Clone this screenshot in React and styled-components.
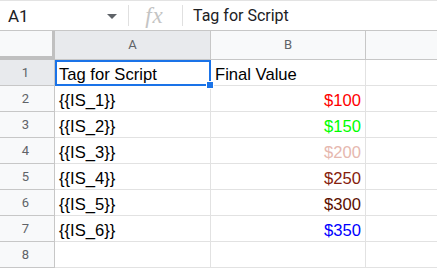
import styled, { createGlobalStyle } from 'styled-components';

const GlobalStyle = createGlobalStyle`
	html, body {
		margin: 0;
		padding: 0;
		background: #ffffff;
		overflow: hidden;
	}
	* {
		box-sizing: border-box;
	}
`;

const rows = [
	{ tag: '{{IS_1}}', value: '$100', color: '#ff0000' },
	{ tag: '{{IS_2}}', value: '$150', color: '#00ff00' },
	{ tag: '{{IS_3}}', value: '$200', color: '#e6b8af' },
	{ tag: '{{IS_4}}', value: '$250', color: '#85200c' },
	{ tag: '{{IS_5}}', value: '$300', color: '#5b0f00' },
	{ tag: '{{IS_6}}', value: '$350', color: '#0000ff' },
	{ tag: '', value: '', color: '#000000' },
];

const App = () => {
	return (
		<Wrapper>
			<GlobalStyle />
			<FormulaBar>
				<NameBox>
					<span>A1</span>
					<Caret />
				</NameBox>
				<Divider />
				<FxLabel>fx</FxLabel>
				<Divider />
				<FormulaText>Tag for Script</FormulaText>
			</FormulaBar>
			<Grid>
				<Corner />
				<ColHeader $active>A</ColHeader>
				<ColHeader>B</ColHeader>
				<ColHeader $last />

				<RowHeader $active>1</RowHeader>
				<Cell $selected>
					Tag for Script
					<Handle />
				</Cell>
				<Cell>Final Value</Cell>
				<Cell $last />

				{rows.map((row, i) => (
					<Row key={i} index={i + 2} row={row} />
				))}
			</Grid>
		</Wrapper>
	);
};

const Row = ({ index, row }) => (
	<>
		<RowHeader>{index}</RowHeader>
		<Cell>{row.tag}</Cell>
		<Cell $right $color={row.color}>
			{row.value}
		</Cell>
		<Cell $last />
	</>
);

const Wrapper = styled.div`
	width: 437px;
	height: 270px;
	overflow: hidden;
	background: #fff;
`;

const FormulaBar = styled.div`
	display: flex;
	align-items: center;
	height: 31px;
	border-top: 1px solid #e3e3e3;
	border-bottom: 1px solid #c7c7c7;
	font-family: Roboto, 'Liberation Sans', sans-serif;
`;

const NameBox = styled.div`
	display: flex;
	align-items: center;
	justify-content: space-between;
	width: 128px;
	padding: 0 11px 0 8px;
	font-size: 17px;
	color: #202124;
`;

const Caret = styled.span`
	width: 0;
	height: 0;
	border-left: 5px solid transparent;
	border-right: 5px solid transparent;
	border-top: 5px solid #5f6368;
	margin-top: 2px;
`;

const Divider = styled.div`
	width: 1px;
	height: 21px;
	background: #e0e0e0;
`;

const FxLabel = styled.div`
	width: 53px;
	text-align: center;
	font-family: 'Liberation Serif', serif;
	font-style: italic;
	font-size: 23px;
	color: #c4c4c4;
	letter-spacing: 1px;
	padding-right: 2px;
	line-height: 1;
`;

const FormulaText = styled.div`
	padding-left: 10px;
	font-size: 16px;
	color: #202124;
`;

const Grid = styled.div`
	display: grid;
	grid-template-columns: 55px 156px 155px 1fr;
	grid-template-rows: 29px repeat(8, 26px);
	font-family: 'Liberation Sans', Arial, sans-serif;
`;

const Corner = styled.div`
	background: #f8f9fa;
	border-right: 3px solid #c0c0c0;
	border-bottom: 4px solid #c0c0c0;
`;

const ColHeader = styled.div`
	display: flex;
	align-items: center;
	justify-content: center;
	padding-bottom: 2px;
	background: ${(p) => (p.$active ? '#e8eaed' : '#f8f9fa')};
	border-right: ${(p) => (p.$last ? 'none' : '1px solid #c7c7c7')};
	border-bottom: 1px solid #c7c7c7;
	font-family: Roboto, 'Liberation Sans', sans-serif;
	font-size: 13px;
	color: #5f6368;
`;

const RowHeader = styled.div`
	display: flex;
	align-items: center;
	justify-content: center;
	padding-right: 3px;
	background: ${(p) => (p.$active ? '#e8eaed' : '#f8f9fa')};
	border-right: 1px solid #c7c7c7;
	border-bottom: 1px solid #c7c7c7;
	font-family: Roboto, 'Liberation Sans', sans-serif;
	font-size: 13px;
	color: #5f6368;
`;

const Cell = styled.div`
	position: relative;
	display: flex;
	align-items: flex-end;
	justify-content: ${(p) => (p.$right ? 'flex-end' : 'flex-start')};
	padding: 0 4px 0 4px;
	border-right: ${(p) => (p.$last ? 'none' : '1px solid #e2e2e2')};
	border-bottom: 1px solid #e2e2e2;
	font-size: 16.6px;
	line-height: 20px;
	color: ${(p) => p.$color || '#000'};
	white-space: nowrap;
	${(p) =>
		p.$selected &&
		`
		outline: 2px solid #1a73e8;
		outline-offset: -2px;
	`}
`;

const Handle = styled.span`
	position: absolute;
	right: -4px;
	bottom: -4px;
	width: 8px;
	height: 8px;
	background: #1a73e8;
	border: 1px solid #fff;
	z-index: 2;
`;

export default App;
